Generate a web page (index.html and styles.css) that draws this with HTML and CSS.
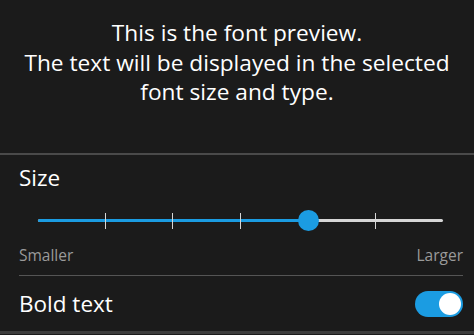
FILE: index.html
```html
<!DOCTYPE html>
<html lang="en">
<head>
    <meta charset="UTF-8">
    <meta name="viewport" content="width=device-width, initial-scale=1.0">
    <title>Font Settings</title>
    <link rel="stylesheet" href="styles.css">
</head>
<body>
    <div class="preview">
        <p>This is the font preview.<br>The text will be displayed in the selected font size and type.</p>
    </div>

    <div class="settings">
        <div class="size-title">Size</div>

        <!-- slider: 7 stops, thumb on stop 4 -->
        <div class="slider">
            <div class="track">
                <div class="fill" style="width: 66.667%"></div>
            </div>
            <div class="stops">
                <span class="stop"></span>
                <span class="stop tick"></span>
                <span class="stop tick"></span>
                <span class="stop tick"></span>
                <span class="stop thumb"></span>
                <span class="stop tick"></span>
                <span class="stop"></span>
            </div>
        </div>

        <div class="labels">
            <span>Smaller</span>
            <span>Larger</span>
        </div>

        <div class="bold-row">
            <span>Bold text</span>
            <div class="toggle on"><div class="knob"></div></div>
        </div>
    </div>
</body>
</html>
```

FILE: styles.css
```css
body {
    margin: 0;
    padding: 0;
    background: #1b1b1b;
    color: #fff;
    font-family: "Open Sans", "Noto Sans", sans-serif;
    height: 335px;
    overflow: hidden;
}
.preview {
    height: 153px;
    border-bottom: 2px solid #4a4a4a;
    text-align: center;
}
.preview p {
    margin: 0;
    padding: 18px 10px 0;
    font-size: 22.7px;
    line-height: 29.5px;
    font-weight: 500;
}
.settings {
    padding: 8px 11px 0 19px;
    border-bottom: 3px solid #3c3c3c;
}
.size-title {
    font-size: 22.5px;
    line-height: 30px;
    font-weight: 500;
}
.slider {
    position: relative;
    height: 24px;
    margin: 16px 20px 0 19px;
}
.track {
    position: absolute;
    left: 0;
    right: 0;
    top: 10px;
    height: 3px;
    background: #d6d6d6;
    border-radius: 2px;
}
.fill {
    height: 100%;
    background: #1b9ce2;
    border-radius: 2px;
}
.stops {
    position: absolute;
    inset: 0;
    display: flex;
    justify-content: space-between;
    align-items: center;
}
.stop {
    width: 0;
    height: 24px;
    position: relative;
}
.tick::before {
    content: "";
    position: absolute;
    left: -1px;
    top: 4px;
    width: 1px;
    height: 16px;
    background: #d6d6d6;
}
.thumb::before {
    content: "";
    position: absolute;
    left: -10px;
    top: 1px;
    width: 21px;
    height: 21px;
    border-radius: 50%;
    background: #1b9ce2;
}
.labels {
    display: flex;
    justify-content: space-between;
    margin-top: 12px;
    font-size: 15.5px;
    line-height: 20px;
    color: #9a9a9a;
    padding-bottom: 10px;
    border-bottom: 1px solid #555;
}
.bold-row {
    display: flex;
    justify-content: space-between;
    align-items: center;
    height: 55px;
    font-size: 22.5px;
    line-height: 30px;
    font-weight: 500;
}
.toggle {
    width: 48px;
    height: 26px;
    border-radius: 13px;
    background: #5a5a5a;
    display: flex;
    align-items: center;
    padding: 0 2px;
    box-sizing: border-box;
}
.toggle.on {
    background: #1b9ce2;
    justify-content: flex-end;
}
.knob {
    width: 22px;
    height: 22px;
    border-radius: 50%;
    background: #fff;
}
```
